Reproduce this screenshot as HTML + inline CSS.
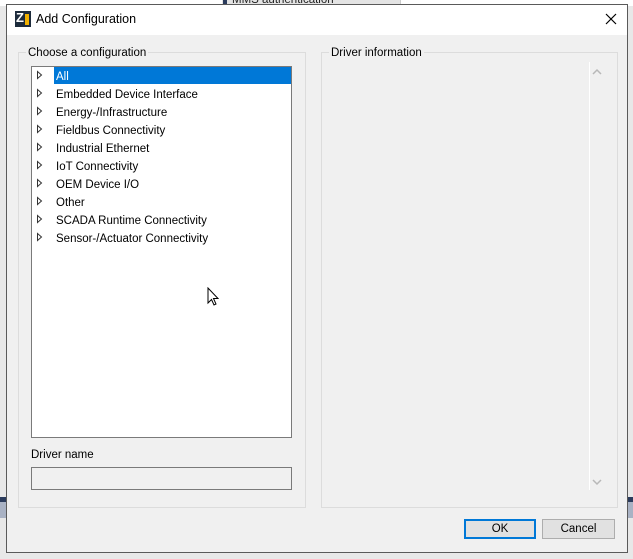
<!DOCTYPE html><html><head><style>
body{margin:0;width:633px;height:559px;position:relative;overflow:hidden;background:#e8e8e8;font-family:"Liberation Sans",sans-serif;font-size:11.5px;color:#000}
.a{position:absolute}
</style></head><body>
<div class="a" style="left:0;top:0;width:633px;height:6px;background:#fff"></div>
<div class="a" style="left:222px;top:0;width:178px;height:5px;background:#e4e4e4;border-right:1px solid #ccc"></div>
<div class="a" style="left:223px;top:0;width:4px;height:5px;background:#2b3b5c"></div>
<div class="a" style="left:232px;top:-6px;font-size:11.5px;color:#222">MMS authentication</div>
<div class="a" style="left:0;top:497px;width:8px;height:5px;background:#2b3b5c"></div>
<div class="a" style="left:0;top:502px;width:8px;height:16px;background:#a9b2c4"></div>
<div class="a" style="left:626px;top:497px;width:7px;height:5px;background:#2b3b5c"></div>
<div class="a" style="left:626px;top:502px;width:7px;height:16px;background:#a9b2c4"></div>
<div class="a" style="left:6px;top:4px;width:620px;height:547px;border:1px solid #5a5a5a;background:#f0f0f0"></div>
<div class="a" style="left:7px;top:5px;width:620px;height:30px;background:#fff"></div>
<div class="a" style="left:15px;top:11px;width:16px;height:16px;background:#1d2b3c"></div>
<div class="a" style="left:16px;top:10px;color:#fff;font-weight:bold;font-size:13px">Z</div>
<div class="a" style="left:25px;top:14px;width:4px;height:11px;background:#f0b000"></div>
<div class="a" style="left:36px;top:12px;font-size:12.5px">Add Configuration</div>
<svg class="a" style="left:605px;top:13px" width="12" height="12"><path d="M1 1L11 11M11 1L1 11" stroke="#000" stroke-width="1.2"/></svg>
<div class="a" style="left:18px;top:52px;width:286px;height:454px;border:1px solid #dcdcdc"></div>
<div class="a" style="left:26px;top:47px;background:#f0f0f0;padding:0 2px">Choose a configuration</div>
<div class="a" style="left:321px;top:52px;width:295px;height:454px;border:1px solid #dcdcdc"></div>
<div class="a" style="left:329px;top:47px;background:#f0f0f0;padding:0 2px">Driver information</div>
<div class="a" style="left:589px;top:62px;width:1px;height:428px;background:#fff"></div>
<svg class="a" style="left:592px;top:68px" width="10" height="8"><path d="M1 6L5 2L9 6" fill="none" stroke="#b8b8b8" stroke-width="1.5"/></svg>
<svg class="a" style="left:592px;top:478px" width="10" height="8"><path d="M1 2L5 6L9 2" fill="none" stroke="#b8b8b8" stroke-width="1.5"/></svg>
<div class="a" style="left:31px;top:66px;width:259px;height:370px;border:1px solid #7a7a7a;background:#fff"></div>
<div class="a" style="left:54px;top:67px;width:237px;height:17px;background:#0078d7"></div>
<svg class="a" style="left:36px;top:68px" width="8" height="180">
<g fill="none" stroke="#333" stroke-width="1">
<path d="M1.5 3.5L5.5 7L1.5 10.5Z"/><path d="M1.5 21.5L5.5 25L1.5 28.5Z"/><path d="M1.5 39.5L5.5 43L1.5 46.5Z"/><path d="M1.5 57.5L5.5 61L1.5 64.5Z"/><path d="M1.5 75.5L5.5 79L1.5 82.5Z"/><path d="M1.5 93.5L5.5 97L1.5 100.5Z"/><path d="M1.5 111.5L5.5 115L1.5 118.5Z"/><path d="M1.5 129.5L5.5 133L1.5 136.5Z"/><path d="M1.5 147.5L5.5 151L1.5 154.5Z"/><path d="M1.5 165.5L5.5 169L1.5 172.5Z"/></g></svg>
<div class="a" style="left:56px;top:68px;line-height:18px">
<div style="color:#fff">All</div><div>Embedded Device Interface</div><div>Energy-/Infrastructure</div><div>Fieldbus Connectivity</div><div>Industrial Ethernet</div><div>IoT Connectivity</div><div>OEM Device I/O</div><div>Other</div><div>SCADA Runtime Connectivity</div><div>Sensor-/Actuator Connectivity</div></div>
<svg class="a" style="left:207px;top:287px" width="14" height="20"><path d="M1 1L1 16L4.5 12.5L7 18L9 17L6.5 11.5L11 11.5Z" fill="#fff" stroke="#000"/></svg>
<div class="a" style="left:31px;top:449px">Driver name</div>
<div class="a" style="left:31px;top:467px;width:259px;height:21px;border:1px solid #7a7a7a;background:#f0f0f0"></div>
<div class="a" style="left:464px;top:519px;width:68px;height:16px;border:2px solid #0078d7;background:#e1e1e1;text-align:center;line-height:17px">OK</div>
<div class="a" style="left:542px;top:519px;width:71px;height:18px;border:1px solid #adadad;background:#e1e1e1;text-align:center;line-height:19px">Cancel</div>
</body></html>
